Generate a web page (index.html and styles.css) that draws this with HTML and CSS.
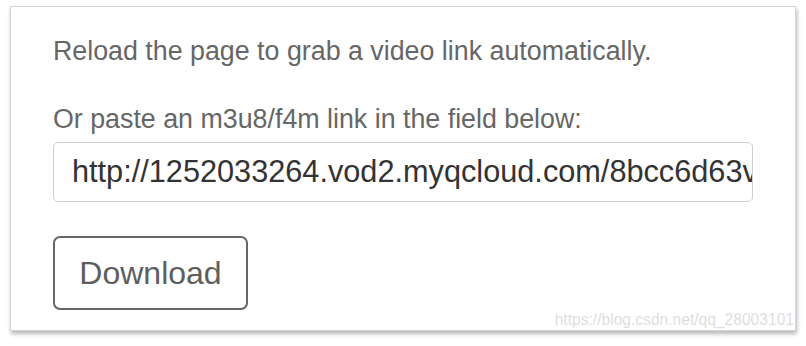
FILE: index.html
```html
<!DOCTYPE html>
<html>
<head>
<meta charset="utf-8">
<link rel="stylesheet" href="styles.css">
</head>
<body>
<div class="panel">
  <p class="line first">Reload the page to grab a video link automatically.</p>
  <p class="line second">Or paste an m3u8/f4m link in the field below:</p>
  <div class="field">http://1252033264.vod2.myqcloud.com/8bcc6d63vodgzp1252033264/video.m3u8</div>
  <button class="btn">Download</button>
  <span class="mark">https://blog.csdn.net/qq_28003101</span>
</div>
</body>
</html>
```

FILE: styles.css
```css
html, body {
  margin: 0;
  padding: 0;
  background: #ffffff;
}
body {
  font-family: "Liberation Sans", Arial, sans-serif;
  width: 806px;
  height: 346px;
  overflow: hidden;
}
.panel {
  position: relative;
  box-sizing: border-box;
  margin: 6px 0 0 10px;
  width: 786px;
  height: 325px;
  background: #fff;
  border: 1px solid #d4d4d4;
  box-shadow: 1px 3px 4px rgba(0,0,0,0.28);
  padding: 0 0 0 42px;
  display: flex;
  flex-direction: column;
  align-items: flex-start;
}
.line {
  margin: 0;
  color: #666;
  font-size: 26.8px;
  line-height: 31px;
  white-space: nowrap;
}
.first { margin-top: 29px; }
.second { margin-top: 37px; }
.field {
  box-sizing: border-box;
  margin-top: 7px;
  width: 700px;
  height: 60px;
  border: 1.5px solid #cfcfcf;
  border-radius: 5px;
  padding: 0 2px 0 18px;
  font-size: 30.7px;
  line-height: 57px;
  color: #333;
  white-space: nowrap;
  overflow: hidden;
}
.btn {
  box-sizing: border-box;
  margin-top: 34px;
  width: 195px;
  height: 74px;
  border: 2px solid #666;
  border-radius: 7px;
  background: #fff;
  color: #5e5e5e;
  font-family: "Liberation Sans", Arial, sans-serif;
  font-size: 32px;
  padding: 0;
}
.mark {
  position: absolute;
  right: 1px;
  bottom: 1px;
  font-size: 15.6px;
  color: rgba(215,215,215,0.85);
}
```
